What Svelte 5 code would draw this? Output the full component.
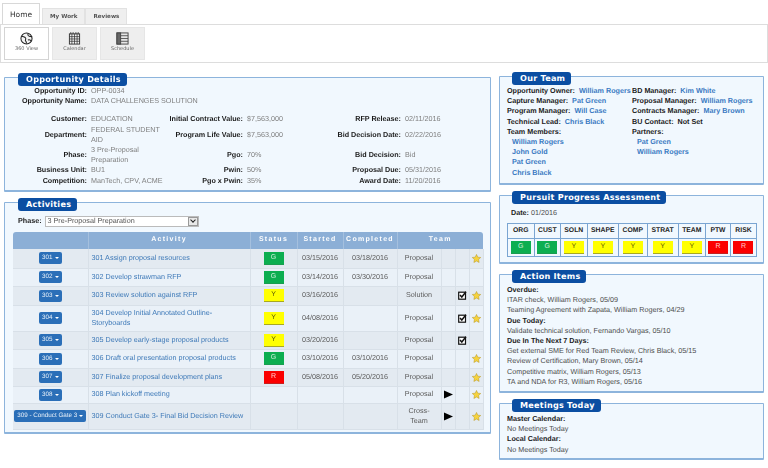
<script>
  const details = [
    ['Customer', 'EDUCATION', 'Initial Contract Value', '$7,563,000', 'RFP Release', '02/11/2016'],
    ['Department', 'FEDERAL STUDENT AID', 'Program Life Value', '$7,563,000', 'Bid Decision Date', '02/22/2016'],
    ['Phase', '3 Pre-Proposal Preparation', 'Pgo', '70%', 'Bid Decision', 'Bid'],
    ['Business Unit', 'BU1', 'Pwin', '50%', 'Proposal Due', '05/31/2016'],
    ['Competition', 'ManTech, CPV, ACME', 'Pgo x Pwin', '35%', 'Award Date', '11/20/2016']
  ];
  const activities = [
    { btn: '301', name: '301 Assign proposal resources', status: 'G', start: '03/15/2016', done: '03/18/2016', team: 'Proposal', star: true, h: 19 },
    { btn: '302', name: '302 Develop strawman RFP', status: 'G', start: '03/14/2016', done: '03/30/2016', team: 'Proposal', h: 18 },
    { btn: '303', name: '303 Review solution against RFP', status: 'Y', start: '03/16/2016', done: '', team: 'Solution', check: true, star: true, h: 19 },
    { btn: '304', name: '304 Develop Initial Annotated Outline-Storyboards', status: 'Y', start: '04/08/2016', done: '', team: 'Proposal', check: true, star: true, h: 26 },
    { btn: '305', name: '305 Develop early-stage proposal products', status: 'Y', start: '03/20/2016', done: '', team: 'Proposal', check: true, h: 18 },
    { btn: '306', name: '306 Draft oral presentation proposal products', status: 'G', start: '03/10/2016', done: '03/10/2016', team: 'Proposal', star: true, h: 19 },
    { btn: '307', name: '307 Finalize proposal development plans', status: 'R', start: '05/08/2016', done: '05/20/2016', team: 'Proposal', star: true, h: 18 },
    { btn: '308', name: '308 Plan kickoff meeting', status: '', start: '', done: '', team: 'Proposal', play: true, star: true, h: 17 },
    { btn: '309 - Conduct Gate 3', name: '309 Conduct Gate 3- Final Bid Decision Review', status: '', start: '', done: '', team: 'Cross-Team', play: true, star: true, h: 26 }
  ];
  const pursuit = [
    ['ORG', 'G', 26.6], ['CUST', 'G', 26.4], ['SOLN', 'Y', 26.6], ['SHAPE', 'Y', 31.4], ['COMP', 'Y', 28.6],
    ['STRAT', 'Y', 31], ['TEAM', 'Y', 27.4], ['PTW', 'R', 25], ['RISK', 'R', 26]
  ];
</script>

<div class="page">
  <nav class="tabs">
    <span class="tab active">Home</span>
    <span class="tab">My Work</span>
    <span class="tab">Reviews</span>
  </nav>
  <div class="toolbar">
    <div class="tool on">
      <svg width="13" height="13" viewBox="0 0 14 14" fill="#f4f4f4" stroke="#222" stroke-width="1.100">
        <circle cx="7" cy="7" r="6" />
        <path fill="none" d="M2 4.500c2 1 3 .5 4 2s-1 2 0 3 1 3 1 3M9 1.500c-1 1.500-.5 2.500 1 3s2.500 0 3 1M8.500 8.500c1.500-.5 3 0 3.500 1.500" />
      </svg>
      <span>360 View</span>
    </div>
    <div class="tool">
      <svg width="13" height="13" viewBox="0 0 14 14" fill="#f2f2f2" stroke="#333" stroke-width="1">
        <rect x="1.500" y="2" width="11" height="11" />
        <path d="M1.500 5h11M1.500 7.500h11M1.500 10h11M4.200 2v11M7 2v11M9.800 2v11" stroke-width=".8" />
        <path d="M3 0v2.500M5.500 0v2.500M8.500 0v2.500M11 0v2.500" stroke-width=".8" />
      </svg>
      <span>Calendar</span>
    </div>
    <div class="tool">
      <svg width="13" height="13" viewBox="0 0 14 14" fill="#e6e6e6" stroke="#444" stroke-width="1">
        <rect x="1" y="1" width="12" height="12" />
        <rect x="1" y="1" width="4" height="12" fill="#666" />
        <path d="M5 4h8M5 7h8M5 10h8" stroke-width=".9" />
      </svg>
      <span>Schedule</span>
    </div>
  </div>

  <main class="main">
    <div class="column left">
      <section class="panel opp">
        <h2>Opportunity Details</h2>
        <div class="details">
          <b>Opportunity ID:</b><span class="wide">OPP-0034</span>
          <b>Opportunity Name:</b><span class="wide">DATA CHALLENGES SOLUTION</span>
          <i class="spacer"></i>
          {#each details as d}
            <b>{d[0]}:</b><span>{d[1]}</span>
            <b>{d[2]}:</b><span>{d[3]}</span>
            <b>{d[4]}:</b><span>{d[5]}</span>
          {/each}
        </div>
      </section>

      <section class="panel act">
        <h2>Activities</h2>
        <div class="phase">
          <b>Phase:</b>
          <div class="select"><span>3 Pre-Proposal Preparation</span><i class="arrow"></i></div>
        </div>
        <table class="grid">
          <colgroup>
            <col style="width:75px" /><col style="width:162px" /><col style="width:47px" /><col style="width:46px" />
            <col style="width:54px" /><col style="width:44px" /><col style="width:14px" /><col style="width:14px" /><col style="width:14px" />
          </colgroup>
          <thead>
            <tr>
              <th></th><th>Activity</th><th>Status</th><th>Started</th><th>Completed</th><th colspan="4" class="teamhead">Team</th>
            </tr>
          </thead>
          <tbody>
            {#each activities as a}
              <tr style="height:{a.h}px">
                <td class="c"><span class="btn">{a.btn}<i class="caret"></i></span></td>
                <td class="name">{a.name}</td>
                <td class="c">{#if a.status}<span class="badge {a.status}">{a.status}</span>{/if}</td>
                <td class="c">{a.start}</td>
                <td class="c">{a.done}</td>
                <td class="c team">{a.team}</td>
                <td class="c ic">
                  {#if a.play}
                    <svg width="9" height="9" viewBox="0 0 9 9"><path d="M0 .5 9 4.500 0 8.500z" fill="#000" /></svg>
                  {/if}
                </td>
                <td class="c ic">
                  {#if a.check}
                    <svg width="9" height="9" viewBox="0 0 9 9">
                      <rect x=".7" y="1.200" width="6.800" height="7" fill="#fff" stroke="#111" stroke-width="1.200" />
                      <path d="M2 4l1.800 2L8 .8" fill="none" stroke="#111" stroke-width="1.500" />
                    </svg>
                  {/if}
                </td>
                <td class="c ic">
                  {#if a.star}
                    <svg width="9" height="9" viewBox="0 0 10 10">
                      <path d="M5 .5 6.400 3.500 9.700 3.900 7.300 6.100 7.900 9.400 5 7.800 2.100 9.400 2.700 6.100.3 3.900 3.600 3.500z" fill="#f7d33c" stroke="#b89a2a" stroke-width=".6" />
                    </svg>
                  {/if}
                </td>
              </tr>
            {/each}
          </tbody>
        </table>
      </section>
    </div>

    <div class="column right">
      <section class="panel team-panel">
        <h2>Our Team</h2>
        <div class="team-cols">
          <div>
            <p><b>Opportunity Owner:</b> <a>William Rogers</a></p>
            <p><b>Capture Manager:</b> <a>Pat Green</a></p>
            <p><b>Program Manager:</b> <a>Will Case</a></p>
            <p><b>Technical Lead:</b> <a>Chris Black</a></p>
            <p><b>Team Members:</b></p>
            <p class="ind"><a>William Rogers</a></p>
            <p class="ind"><a>John Gold</a></p>
            <p class="ind"><a>Pat Green</a></p>
            <p class="ind"><a>Chris Black</a></p>
          </div>
          <div>
            <p><b>BD Manager:</b> <a>Kim White</a></p>
            <p><b>Proposal Manager:</b> <a>William Rogers</a></p>
            <p><b>Contracts Manager:</b> <a>Mary Brown</a></p>
            <p><b>BU Contact:</b> <b>Not Set</b></p>
            <p><b>Partners:</b></p>
            <p class="ind"><a>Pat Green</a></p>
            <p class="ind"><a>William Rogers</a></p>
          </div>
        </div>
      </section>

      <section class="panel pursuit">
        <h2>Pursuit Progress Assessment</h2>
        <p class="date"><b>Date:</b> 01/2016</p>
        <table class="ppa">
          <tbody>
            <tr>{#each pursuit as p}<th style="width:{p[2]}px">{p[0]}</th>{/each}</tr>
            <tr>{#each pursuit as p}<td><span class="badge {p[1]}">{p[1]}</span></td>{/each}</tr>
          </tbody>
        </table>
      </section>

      <section class="panel list">
        <h2>Action Items</h2>
        <p><b>Overdue:</b></p>
        <p>ITAR check, William Rogers, 05/09</p>
        <p>Teaming Agreement with Zapata, William Rogers, 04/29</p>
        <p><b>Due Today:</b></p>
        <p>Validate technical solution, Fernando Vargas, 05/10</p>
        <p><b>Due In The Next 7 Days:</b></p>
        <p>Get external SME for Red Team Review, Chris Black, 05/15</p>
        <p>Review of Certification, Mary Brown, 05/14</p>
        <p>Competitive matrix, William Rogers, 05/13</p>
        <p>TA and NDA for R3, William Rogers, 05/16</p>
      </section>

      <section class="panel list meet">
        <h2>Meetings Today</h2>
        <p><b>Master Calendar:</b></p>
        <p>No Meetings Today</p>
        <p><b>Local Calendar:</b></p>
        <p>No Meetings Today</p>
      </section>
    </div>
  </main>
</div>

<style>
  :global(body) { margin: 0; background: #fff; }
  .page {
    width: 768px;
    height: 468px;
    overflow: hidden;
    font: 7.200px/10.200px "Liberation Sans", Arial, sans-serif;
    text-rendering: geometricPrecision;
    color: #4d4d4d;
    filter: blur(.3px);
  }
  p { margin: 0; }
  b { font-weight: bold; color: #1c1c1c; }
  i { font-style: normal; }

  .tabs { display: flex; align-items: flex-end; height: 24px; padding: 4px 0 0 2px; box-sizing: border-box; }
  .tab {
    height: 16px; padding: 0 7px; box-sizing: border-box;
    background: #efefef; border: 1px solid #e2e2e2; border-bottom: 0;
    font: bold 5.600px/17px "DejaVu Sans", Verdana, sans-serif; color: #555;
  }
  .tab.active {
    height: 21px; width: 38px; padding: 0; margin-right: 2px; text-align: center;
    background: #fff; border-color: #d8d8d8;
    font: 7.500px/22px "DejaVu Sans", Verdana, sans-serif; color: #333;
  }
  .toolbar {
    display: flex; gap: 3px; height: 39px; box-sizing: border-box; padding: 2px 3px;
    border: 1px solid #ddd;
  }
  .tool {
    width: 45px; height: 33px; box-sizing: border-box; background: #eee; border: 1px solid #e6e6e6;
    display: flex; flex-direction: column; align-items: center; padding-top: 4px; gap: 1px;
    font: 5px/7px "DejaVu Sans", Verdana, sans-serif; color: #666;
  }
  .tool.on { background: #fff; border-color: #d4d4d4; }

  .main { display: grid; grid-template-columns: 487px 265px; gap: 8px; padding: 13px 4px 0; }
  .column { display: flex; flex-direction: column; gap: 10px; }
  .panel {
    position: relative; box-sizing: border-box; background: #f1f8fe;
    border: 1px solid #8db4dc; border-bottom-width: 2px; border-radius: 1px;
  }
  .panel h2 {
    position: absolute; top: -5px; left: 13px; margin: 0; height: 13px; padding: 0 6px 0 8px;
    background: #0b4ea2; border-radius: 3px; color: #fff; white-space: nowrap;
    font: bold 8.100px/13px "DejaVu Sans", Verdana, sans-serif; letter-spacing: .25px;
  }
  .right .panel h2 { left: 12px; }

  .opp { height: 115px; margin-top: 1px; padding-top: 8px; }
  .details {
    display: grid; grid-template-columns: 84px 77px 79px 55px 103px auto;
    align-items: center; color: #808080;
  }
  .details b { text-align: right; padding-right: 2px; white-space: nowrap; }
  .details span { padding-left: 2px; }
  .details .wide { grid-column: 2 / -1; }
  .details .spacer { grid-column: 1 / -1; height: 8px; }

  .act { height: 232px; padding: 12px 8px 0 8px; }
  .phase { display: flex; align-items: center; gap: 3px; height: 13px; padding-left: 5px; margin-bottom: 4px; }
  .select {
    width: 154px; height: 11px; box-sizing: border-box; background: #fff; border: 1px solid #bbb;
    display: flex; align-items: center; justify-content: space-between; padding-left: 2px; color: #555;
  }
  .arrow {
    width: 10px; height: 9px; box-sizing: border-box; background: #e8e8e8; border: 1px solid #999; position: relative;
  }
  .arrow::after {
    content: ""; position: absolute; left: 2px; top: 0; width: 3px; height: 3px;
    border-right: 1.500px solid #222; border-bottom: 1.500px solid #222; transform: rotate(45deg);
  }
  .grid { width: 470px; table-layout: fixed; border-collapse: collapse; color: #5c5c5c; }
  .grid th {
    height: 17px; padding: 0; background: #8cafd6; color: #fff; font-weight: bold; font-size: 7px;
    letter-spacing: 1.300px; border-right: 1px solid #a5c0de;
  }
  .grid th:first-child { border-radius: 3px 0 0 0; }
  .grid th:last-child { border-radius: 0 3px 0 0; border-right: 0; }
  .grid td { padding: 0; border: 1px solid #d8e0e8; border-width: 0 1px 1px 0; vertical-align: middle; }
  .grid tbody tr:nth-child(odd) { background: #e3eaf1; }
  .grid tbody tr:nth-child(even) { background: #eaf1f8; }
  .c { text-align: center; }
  .grid .name { color: #3f7ab8; padding-left: 3px; }
  .grid .team { padding: 0 6px; }
  .ic svg { display: block; margin: 0 auto; }
  .btn {
    display: inline-flex; align-items: center; justify-content: center; gap: 2px; min-width: 22px; height: 12px; padding: 0 3px;
    box-sizing: border-box; white-space: nowrap; background: #2b6fb8; color: #e6eff8; border-radius: 2px; font-size: 6.300px; line-height: 12px;
  }
  .caret { width: 0; height: 0; border: 2px solid transparent; border-top-color: #fff; border-bottom: 0; }
  .badge {
    display: block; width: 20px; height: 13px; margin: 0 auto; box-sizing: border-box; font-size: 7px; line-height: 12px; text-align: center;
  }
  .badge.G { background: #0cae50; color: #cdeeda; border-bottom: 1px solid #1a9c50; }
  .badge.Y { background: #ffff00; color: #55550a; border-bottom: 1px solid #a8a820; }
  .badge.R { background: #fb0000; color: #ffd0d0; border-bottom: 1px solid #c42020; }

  .team-panel { height: 109px; padding: 9px 7px 0; }
  .team-cols { display: grid; grid-template-columns: 125px auto; }
  .team-cols p { white-space: nowrap; }
  .team-cols b { margin-right: 2px; }
  a { color: #3a7ac2; font-weight: bold; }
  .ind { padding-left: 5px; }

  .pursuit { height: 69px; padding: 12px 7px 0; }
  .date { padding-left: 4px; margin-bottom: 5px; }
  .ppa { width: 249px; table-layout: fixed; border-collapse: collapse; }
  .ppa th, .ppa td { box-sizing: border-box; border: 1px solid #7aa5d2; padding: 0; text-align: center; }
  .ppa th { height: 15px; font-size: 6.800px; color: #1c1c1c; }
  .ppa td { height: 18px; }

  .list { height: 119px; padding: 10px 7px 0; }
  .meet { height: 57px; padding-top: 10px; }
</style>
